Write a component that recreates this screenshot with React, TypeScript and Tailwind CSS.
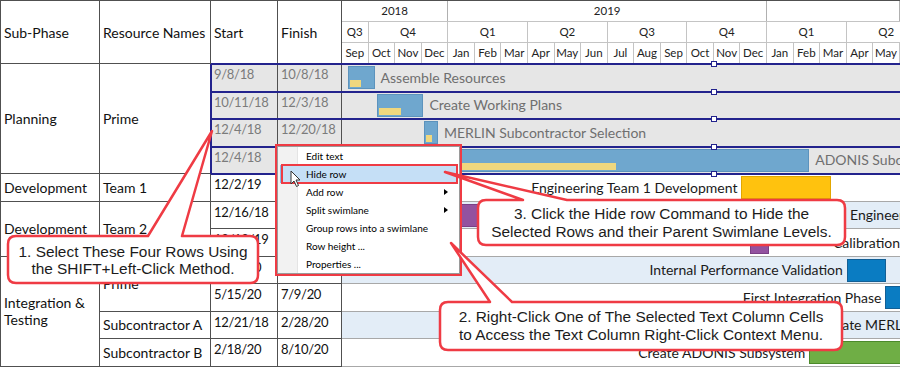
import React from "react";

const M = 26.57;
const TW = 558;

function pos(date: string) {
  const [m, d, yy] = date.split("/").map(Number);
  const y = 2000 + yy;
  const days = new Date(y, m, 0).getDate();
  return ((y - 2018) * 12 + (m - 9) + (d - 1) / days) * M;
}

const ROW = [
  "row-start-2",
  "row-start-3",
  "row-start-4",
  "row-start-5",
  "row-start-6",
  "row-start-7",
  "row-start-8",
  "row-start-9",
  "row-start-10",
  "row-start-11",
  "row-start-12",
];

type Row = {
  start: string;
  finish: string;
  selected?: boolean;
  tint?: boolean;
  from: string;
  to: string;
  bar: string;
  progress?: number;
  label: string;
  side: "left" | "right";
  labelLeft?: number;
  extra?: { text: string; left: number };
};

const steel = "bg-[#6fa7ce] border-[#5c93bd]";
const blue = "bg-[#0a7cc2] border-[#125f95]";
const purple = "bg-[#93529f] border-[#7a3f86]";

const rows: Row[] = [
  { start: "9/8/18", finish: "10/8/18", selected: true, from: "9/8/18", to: "10/8/18", bar: steel, progress: 11, label: "Assemble Resources", side: "right" },
  { start: "10/11/18", finish: "12/3/18", selected: true, from: "10/11/18", to: "12/3/18", bar: steel, progress: 22, label: "Create Working Plans", side: "right" },
  { start: "12/4/18", finish: "12/20/18", selected: true, from: "12/4/18", to: "12/20/18", bar: steel, progress: 6, label: "MERLIN Subcontractor Selection", side: "right" },
  { start: "12/4/18", finish: "2/18/20", selected: true, from: "12/4/18", to: "2/18/20", bar: steel, progress: 190, label: "ADONIS Subcontractor Selection", side: "right" },
  { start: "12/2/19", finish: "3/13/20", from: "12/2/19", to: "3/13/20", bar: "bg-[#ffc20e] border-[#e2a600]", label: "Engineering Team 1 Development", side: "left" },
  { start: "12/16/18", finish: "2/5/19", tint: true, from: "12/16/18", to: "2/5/19", bar: purple, label: "Engineering Team 2 Development", side: "right", extra: { text: "Engineering Team 2 Testing", left: 508 } },
  { start: "12/12/19", finish: "1/3/20", from: "12/12/19", to: "1/3/20", bar: purple, label: "Calibration", side: "right", labelLeft: 491 },
  { start: "3/31/20", finish: "5/15/20", tint: true, from: "4/1/20", to: "5/16/20", bar: blue, label: "Internal Performance Validation", side: "left" },
  { start: "5/15/20", finish: "7/9/20", from: "5/15/20", to: "7/9/20", bar: blue, label: "First Integration Phase", side: "left" },
  { start: "12/21/18", finish: "2/28/20", tint: true, from: "12/24/18", to: "2/8/20", bar: blue, label: "Integrate MERLIN Subsystem", side: "right" },
  { start: "2/18/20", finish: "8/10/20", from: "2/18/20", to: "8/10/20", bar: "bg-[#6fae45] border-[#4c8a2b]", label: "Create ADONIS Subsystem", side: "left" },
];

const years = [
  { t: "2018", n: 4 },
  { t: "2019", n: 12 },
  { t: "", n: 5 },
];
const quarters = [
  { t: "Q3", n: 1 },
  { t: "Q4", n: 3 },
  { t: "Q1", n: 3 },
  { t: "Q2", n: 3 },
  { t: "Q3", n: 3 },
  { t: "Q4", n: 3 },
  { t: "Q1", n: 3 },
  { t: "Q2", n: 3 },
];
const months = [
  "Sep", "Oct", "Nov", "Dec", "Jan", "Feb", "Mar", "Apr", "May", "Jun", "Jul", "Aug",
  "Sep", "Oct", "Nov", "Dec", "Jan", "Feb", "Mar", "Apr", "May",
];

function TimeHeader() {
  return (
    <div className="row-start-1 col-start-5 flex flex-col overflow-hidden border-b border-[#505050] text-[11.5px] text-[#222]">
      <div className="flex h-[21px] shrink-0 border-b border-[#c4c4c4]">
        {years.map((y, i) => (
          <div key={i} className="shrink-0 border-r border-[#b0b0b0] text-center leading-[20px]" style={{ width: y.n * M }}>
            {y.t}
          </div>
        ))}
      </div>
      <div className="flex h-[21px] shrink-0 border-b border-[#c4c4c4]">
        {quarters.map((q, i) => (
          <div key={i} className="shrink-0 border-r border-[#c4c4c4] text-center leading-[20px]" style={{ width: q.n * M }}>
            {q.t}
          </div>
        ))}
      </div>
      <div className="flex flex-1">
        {months.map((m, i) => (
          <div key={i} className="w-[26.57px] shrink-0 border-r border-[#c4c4c4] text-center leading-[20px]">
            {m}
          </div>
        ))}
      </div>
    </div>
  );
}

function Lane({ row, i }: { row: Row; i: number }) {
  const a = pos(row.from);
  const b = pos(row.to);
  const bg = row.selected ? "bg-[#e6e6e6]" : row.tint ? "bg-[#e3edf7]" : "bg-white";
  const place =
    row.labelLeft !== undefined
      ? { left: row.labelLeft }
      : row.side === "right"
      ? { left: b + 6 }
      : { right: TW - a + 4 };
  return (
    <div className={`${ROW[i]} col-start-5 relative overflow-hidden border-b border-[#a8a8a8] ${bg}`}>
      <div className={`absolute top-[2px] h-[23px] border ${row.bar}`} style={{ left: a, width: b - a }}>
        {row.progress ? (
          <div className="absolute left-[1px] bottom-[1px] h-[7px] bg-[#efd77e]" style={{ width: row.progress }} />
        ) : null}
      </div>
      <span
        className={`absolute inset-y-0 flex items-center whitespace-nowrap text-[14px] ${
          row.selected ? "text-[#6f6f6f]" : "text-[#1a1a1a]"
        }`}
        style={place}
      >
        {row.label}
      </span>
      {row.extra && (
        <span className="absolute inset-y-0 flex items-center whitespace-nowrap text-[14px] text-[#1a1a1a]" style={{ left: row.extra.left }}>
          {row.extra.text}
        </span>
      )}
    </div>
  );
}

function bubble(x1: number, y1: number, x2: number, y2: number, b1: number, b2: number, tx: number, ty: number) {
  const r = 8;
  return `M${x1 + r} ${y1} L${b1} ${y1} L${tx} ${ty} L${b2} ${y1} L${x2 - r} ${y1} Q${x2} ${y1} ${x2} ${y1 + r} L${x2} ${y2 - r} Q${x2} ${y2} ${x2 - r} ${y2} L${x1 + r} ${y2} Q${x1} ${y2} ${x1} ${y2 - r} L${x1} ${y1 + r} Q${x1} ${y1} ${x1 + r} ${y1} Z`;
}

function ContextMenu() {
  const items = [
    { t: "Edit text" },
    { t: "Hide row", hl: true },
    { t: "Add row", sub: true },
    { t: "Split swimlane", sub: true },
    { t: "Group rows into a swimlane" },
    { t: "Row height ..." },
    { t: "Properties ..." },
  ];
  return (
    <div className="absolute left-[275px] top-[144px] w-[187px] h-[132px] border-2 border-[#ef3b44]">
      <div className="relative h-full border border-[#9a9a9a] bg-white">
        <div className="absolute left-0 top-0 bottom-0 w-[20px] bg-[#f2f2f2] border-r border-[#e4e4e4]" />
        <div className="relative">
          {items.map((it) => (
            <div key={it.t} className="relative h-[18px]">
              {it.hl && (
                <>
                  <div className="absolute left-[2px] right-[2px] top-0 bottom-0 bg-[#c5dff6] border border-[#8bbce8]" />
                  <div className="absolute left-[3px] right-[1px] -top-[1px] -bottom-[1px] border-2 border-[#ef3b44]" />
                </>
              )}
              <span className="absolute left-[28px] top-0 leading-[18px] text-[10px] text-black whitespace-nowrap">{it.t}</span>
              {it.sub && (
                <span className="absolute right-[11px] top-[6px] border-y-[3.5px] border-y-transparent border-l-[4px] border-l-black" />
              )}
            </div>
          ))}
        </div>
      </div>
    </div>
  );
}

function Callouts() {
  return (
    <>
      <svg className="absolute left-0 top-0 pointer-events-none" width="900" height="367">
        <path d={bubble(478, 200, 845, 245, 523, 567, 445, 172)} fill="white" stroke="#ef3b44" strokeWidth="2.5" strokeLinejoin="round" />
        <path d={bubble(440, 302, 842, 350, 490, 512, 451, 243)} fill="white" stroke="#ef3b44" strokeWidth="2.5" strokeLinejoin="round" />
        <path d={bubble(8, 236, 258, 283, 148, 182, 212, 131)} fill="white" stroke="#ef3b44" strokeWidth="2.5" strokeLinejoin="round" />
      </svg>
      <div className="absolute left-[8px] top-[236px] w-[250px] h-[47px] flex flex-col items-center justify-center text-center text-[15.4px] leading-[17px] text-[#1c1c1c] [font-family:Liberation_Sans,Arial,sans-serif]">
        <span>1. Select These Four Rows Using</span>
        <span>the SHIFT+Left-Click Method.</span>
      </div>
      <div className="absolute left-[478px] top-[200px] w-[367px] h-[45px] flex flex-col items-center justify-center text-center text-[15.4px] leading-[18px] text-[#1c1c1c] [font-family:Liberation_Sans,Arial,sans-serif]">
        <span>3. Click the Hide row Command to Hide the</span>
        <span>Selected Rows and their Parent Swimlane Levels.</span>
      </div>
      <div className="absolute left-[440px] top-[302px] w-[402px] h-[48px] flex flex-col items-center justify-center text-center text-[15.4px] leading-[18px] text-[#1c1c1c] [font-family:Liberation_Sans,Arial,sans-serif]">
        <span>2. Right-Click One of The Selected Text Column Cells</span>
        <span>to Access the Text Column Right-Click Context Menu.</span>
      </div>
    </>
  );
}

export default function App() {
  const cell = "border-r border-b border-[#505050]";
  const date = "px-[3px] pt-[1px] leading-[18px] text-[13px] tracking-[-0.3px] whitespace-nowrap overflow-hidden";
  return (
    <div className="relative w-[900px] h-[367px] overflow-hidden bg-white text-[#111] [font-family:Lato,sans-serif]">
      <div className="grid grid-cols-[99px_111px_67px_64px_558px] grid-rows-[63px_repeat(11,27.5px)] border-l border-t border-[#505050] text-[14px]">
        <div className={`row-start-1 col-start-1 ${cell} flex items-center px-[3px]`}>Sub-Phase</div>
        <div className={`row-start-1 col-start-2 ${cell} flex items-center px-[3px]`}>Resource Names</div>
        <div className={`row-start-1 col-start-3 ${cell} flex items-center px-[3px]`}>Start</div>
        <div className={`row-start-1 col-start-4 ${cell} flex items-center px-[3px]`}>Finish</div>
        <TimeHeader />

        <div className={`row-start-2 row-span-4 col-start-1 ${cell} flex items-center px-[3px]`}>Planning</div>
        <div className={`row-start-6 col-start-1 ${cell} flex items-center px-[3px]`}>Development</div>
        <div className={`row-start-7 row-span-2 col-start-1 ${cell} flex items-center px-[3px]`}>Development</div>
        <div className={`row-start-9 row-span-4 col-start-1 ${cell} flex items-center px-[3px] leading-[17px]`}>Integration &amp; Testing</div>

        <div className={`row-start-2 row-span-4 col-start-2 ${cell} flex items-center px-[3px]`}>Prime</div>
        <div className={`row-start-6 col-start-2 ${cell} flex items-center px-[3px]`}>Team 1</div>
        <div className={`row-start-7 row-span-2 col-start-2 ${cell} flex items-center px-[3px]`}>Team 2</div>
        <div className={`row-start-9 row-span-2 col-start-2 ${cell} flex items-center px-[3px]`}>Prime</div>
        <div className={`row-start-11 col-start-2 ${cell} flex items-center px-[3px]`}>Subcontractor A</div>
        <div className={`row-start-12 col-start-2 ${cell} flex items-center px-[3px]`}>Subcontractor B</div>

        {rows.map((r, i) => (
          <React.Fragment key={i}>
            <div className={`${ROW[i]} col-start-3 ${cell} ${date} ${r.selected ? "bg-[#e6e6e6] text-[#7b7b7b]" : ""}`}>{r.start}</div>
            <div className={`${ROW[i]} col-start-4 ${cell} ${date} ${r.selected ? "bg-[#e6e6e6] text-[#7b7b7b]" : ""}`}>{r.finish}</div>
            <Lane row={r} i={i} />
          </React.Fragment>
        ))}

        {[0, 1, 2, 3, 4].map((i) => (
          <div key={i} className={`${ROW[i]} col-start-3 col-span-3 relative pointer-events-none`}>
            <div className="absolute left-0 right-0 -top-[1px] h-[2px] bg-[#23238d]" />
            <div className="absolute left-[500px] -top-[3px] w-[6px] h-[6px] bg-white border border-[#23238d]" />
          </div>
        ))}
        <div className="row-start-2 row-span-4 col-start-3 relative pointer-events-none">
          <div className="absolute -left-[1px] top-0 bottom-0 w-[2px] bg-[#23238d]" />
        </div>
      </div>

      <ContextMenu />

      <svg className="absolute left-[290px] top-[170px]" width="12" height="18" viewBox="0 0 12 18">
        <path d="M1 1 L1 14 L4 11 L6.5 16.5 L8.5 15.5 L6 10 L10 10 Z" fill="white" stroke="#333" strokeWidth="1" strokeLinejoin="round" />
      </svg>

      <Callouts />
    </div>
  );
}
